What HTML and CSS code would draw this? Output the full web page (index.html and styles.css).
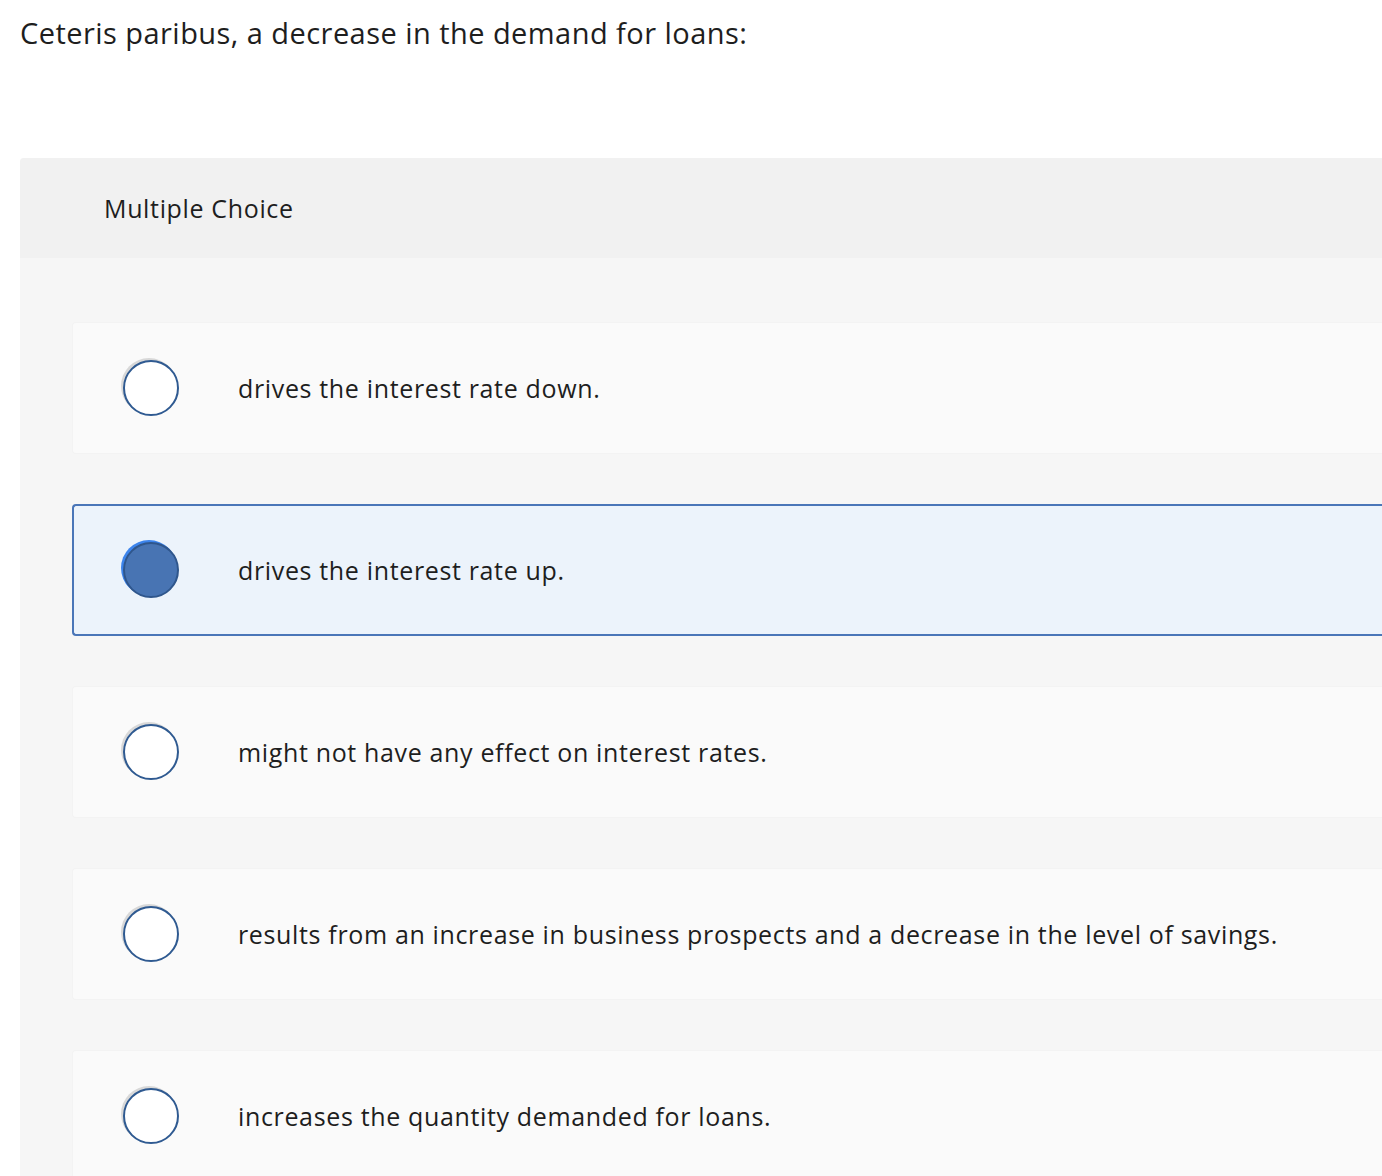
FILE: index.html
```html
<!DOCTYPE html>
<html>
  <head>
    <title>Multiple Choice</title>
    <link rel="stylesheet" href="styles.css">
  </head>
  <body>
    <div class="page">
      <p class="question">Ceteris paribus, a decrease in the demand for loans:</p>

      <div class="panel">
        <div class="panel-header">Multiple Choice</div>
        <div class="choices">
          <label class="choice">
            <span class="radio"></span>
            <span class="choice-text">drives the interest rate down.</span>
          </label>
          <label class="choice selected">
            <span class="radio"></span>
            <span class="choice-text">drives the interest rate up.</span>
          </label>
          <label class="choice">
            <span class="radio"></span>
            <span class="choice-text">might not have any effect on interest rates.</span>
          </label>
          <label class="choice">
            <span class="radio"></span>
            <span class="choice-text">results from an increase in business prospects and a decrease in the level of savings.</span>
          </label>
          <label class="choice">
            <span class="radio"></span>
            <span class="choice-text">increases the quantity demanded for loans.</span>
          </label>
        </div>
      </div>
    </div>
  </body>
</html>
```

FILE: styles.css
```css
body {
  margin: 0;
  font-family: "Open Sans", sans-serif;
  color: #1e1e1e;
  background-color: #fff;
  overflow: hidden;
}

.page {
  padding-left: 20px;
}

.question {
  margin: 0;
  padding-top: 15px;
  font-size: 29px;
  line-height: 36px;
  letter-spacing: 0.45px;
}

.panel {
  margin-top: 107px;
  margin-right: -40px;
  background-color: #f6f6f6;
  border-radius: 4px 0 0 0;
}

.panel-header {
  display: flex;
  align-items: center;
  height: 100px;
  padding-left: 84px;
  background-color: #f1f1f1;
  font-size: 25px;
  letter-spacing: 0.65px;
  border-radius: 4px 0 0 0;
}

.choices {
  display: flex;
  flex-direction: column;
  gap: 50px;
  padding: 64px 0 40px 52px;
}

.choice {
  display: flex;
  align-items: center;
  height: 132px;
  box-sizing: border-box;
  padding-left: 50px;
  background-color: #fafafa;
  border: 1px solid #f3f3f3;
  border-right: none;
  border-radius: 4px 0 0 4px;
  cursor: pointer;
}

.choice.selected {
  background-color: #ecf3fb;
  border: 2px solid #4a76b8;
  border-right: none;
  padding-left: 49px;
}

.radio {
  flex: none;
  width: 56px;
  height: 56px;
  box-sizing: border-box;
  border: 2px solid #2f5a91;
  border-radius: 50%;
  background-color: #fff;
  box-shadow: -2px -2px 0 0 #d8d8d8;
  margin-right: 59px;
}

.choice.selected .radio {
  background-color: #4874b3;
  border-color: #2f568c;
  box-shadow: -2px -2px 0 0 #3c84ec;
}

.choice-text {
  font-size: 25px;
  line-height: 30px;
  letter-spacing: 0.65px;
}
```
